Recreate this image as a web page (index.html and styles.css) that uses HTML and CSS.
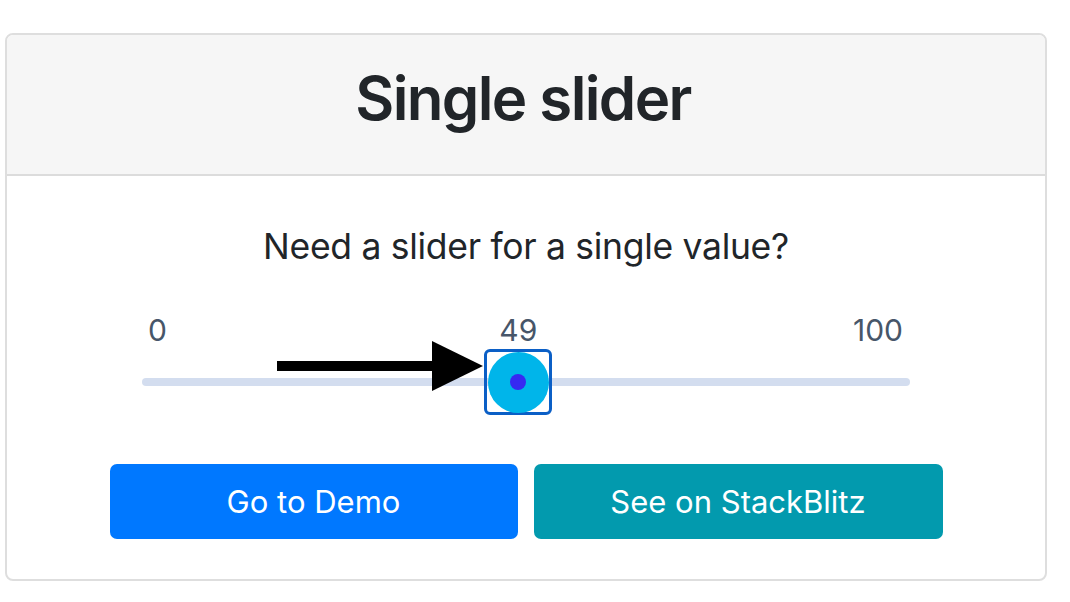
FILE: index.html
```html
<!DOCTYPE html>
<html>
<head>
<meta charset="utf-8">
<link rel="stylesheet" href="styles.css">
</head>
<body>
<div class="card">
  <div class="card-header">
    <h1 class="title">Single slider</h1>
  </div>
  <div class="card-body">
    <p class="subtitle">Need a slider for a single value?</p>
    <div class="slider">
      <div class="labels">
        <span class="label">0</span>
        <span class="label">100</span>
        <span class="label value" style="left: 49%">49</span>
      </div>
      <div class="track-area">
        <div class="track"></div>
        <div class="handle" style="left: calc(49% - 34px)">
          <div class="knob"><div class="dot"></div></div>
        </div>
        <svg class="arrow" width="206" height="50" viewBox="0 0 206 50">
          <rect x="0" y="20" width="157" height="10" fill="#000"/>
          <polygon points="155,0 206,25 155,50" fill="#000"/>
        </svg>
      </div>
    </div>
    <div class="buttons">
      <a class="btn btn-primary">Go to Demo</a>
      <a class="btn btn-info">See on StackBlitz</a>
    </div>
  </div>
</div>
</body>
</html>
```
FILE: styles.css
```css
* { box-sizing: border-box; }
html, body { margin: 0; padding: 0; background: #fff; }
body {
  font-family: "Inter", "Liberation Sans", sans-serif;
  color: #212529;
  padding: 33px 23px 0 5px;
}
.card {
  width: 1042px;
  height: 548px;
  border: 2px solid #dedede;
  border-radius: 8px;
  overflow: hidden;
  display: flex;
  flex-direction: column;
}
.card-header {
  height: 141px;
  background: #f6f6f6;
  border-bottom: 2px solid #dcdcdc;
  display: flex;
  align-items: center;
  justify-content: center;
  padding-bottom: 14px;
  padding-right: 6px;
}
.title {
  margin: 0;
  font-size: 60px;
  font-weight: 600;
  letter-spacing: -1.6px;
  line-height: 1;
  color: #212529;
}
.card-body {
  flex: 1;
  display: flex;
  flex-direction: column;
  align-items: center;
  padding-top: 50px;
}
.subtitle {
  margin: 0;
  font-size: 35.5px;
  line-height: 42px;
  letter-spacing: -0.3px;
  color: #212529;
}
.slider {
  position: relative;
  width: 768px;
  margin-top: 44px;
}
.labels {
  position: relative;
  display: flex;
  justify-content: space-between;
  padding: 0 7px 0 6px;
  height: 37px;
}
.label {
  font-size: 30px;
  line-height: 36px;
  color: #475669;
}
.label.value {
  position: absolute;
  top: 0;
  transform: translateX(-50%);
}
.track-area {
  position: relative;
  height: 66px;
  display: flex;
  align-items: center;
}
.track {
  width: 100%;
  height: 8px;
  border-radius: 4px;
  background: #d3ddef;
}
.handle {
  position: absolute;
  top: 0;
  width: 68px;
  height: 66px;
  border: 3px solid #0b5fc6;
  border-radius: 6px;
  display: flex;
  align-items: center;
  justify-content: center;
}
.knob {
  width: 61px;
  height: 61px;
  border-radius: 50%;
  background: #00b5ea;
  display: flex;
  align-items: center;
  justify-content: center;
}
.dot {
  width: 16px;
  height: 16px;
  border-radius: 50%;
  background: #3629f2;
}
.arrow {
  position: absolute;
  left: 135px;
  top: -8px;
}
.buttons {
  display: flex;
  gap: 16px;
  margin-top: 49px;
}
.btn {
  width: 408px;
  height: 75px;
  border-radius: 7px;
  color: #fff;
  font-size: 31px;
  display: flex;
  align-items: center;
  justify-content: center;
  text-decoration: none;
}
.btn-primary { background: #0078ff; }
.btn-info { background: #029aae; width: 409px; }
```
